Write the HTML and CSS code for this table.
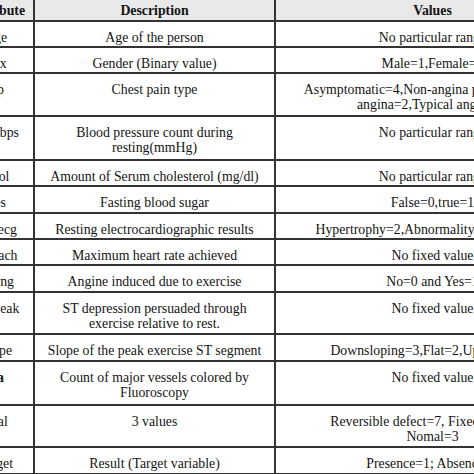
FILE: index.html
```html
<!DOCTYPE html>
<html>
<head>
<meta charset="utf-8">
<link rel="stylesheet" href="styles.css">
</head>
<body>
<div class="frame">
<table class="attrs">
<colgroup><col class="c-attr"><col class="c-desc"><col class="c-val"></colgroup>
<thead>
<tr class="h"><th>Attribute</th><th>Description</th><th>Values</th></tr>
</thead>
<tbody>
<tr class="s"><td>age</td><td>Age of the person</td><td>No particular range</td></tr>
<tr class="s"><td>sex</td><td>Gender (Binary value)</td><td>Male=1,Female=0</td></tr>
<tr class="d1"><td>cp</td><td>Chest pain type</td><td>Asymptomatic=4,Non-angina pain=3,Atypical<br>angina=2,Typical angina=1</td></tr>
<tr class="d2"><td>trestbps</td><td>Blood pressure count during<br>resting(mmHg)</td><td>No particular range</td></tr>
<tr class="s"><td>chol</td><td>Amount of Serum cholesterol (mg/dl)</td><td>No particular range</td></tr>
<tr class="s"><td>fbs</td><td>Fasting blood sugar</td><td>False=0,true=1</td></tr>
<tr class="s"><td>restecg</td><td>Resting electrocardiographic results</td><td>Hypertrophy=2,Abnormality=1,Normal=0</td></tr>
<tr class="s"><td>thalach</td><td>Maximum heart rate achieved</td><td>No fixed value</td></tr>
<tr class="s"><td>exang</td><td>Angine induced due to exercise</td><td>No=0 and Yes=1</td></tr>
<tr class="d1"><td>oldpeak</td><td>ST depression persuaded through<br>exercise relative to rest.</td><td>No fixed value</td></tr>
<tr class="s"><td>slope</td><td>Slope of the peak exercise ST segment</td><td>Downsloping=3,Flat=2,Upsloping=1</td></tr>
<tr class="d2"><td class="b">ca</td><td>Count of major vessels colored by<br>Fluoroscopy</td><td>No fixed value</td></tr>
<tr class="d1"><td>thal</td><td>3 values</td><td>Reversible defect=7, Fixed defect=6,<br>Nomal=3</td></tr>
<tr class="s"><td>target</td><td>Result (Target variable)</td><td>Presence=1; Absence=0</td></tr>
</tbody>
</table>
</div>
</body>
</html>
```
FILE: styles.css
```css
html, body {
  margin: 0;
  padding: 0;
  background: #ffffff;
}
.frame {
  width: 474px;
  height: 474px;
  overflow: hidden;
  position: relative;
}
.attrs {
  border-collapse: collapse;
  table-layout: fixed;
  width: 629px;
  margin-left: -40px;
  margin-top: -7px;
  font-family: "Liberation Serif", "Times New Roman", serif;
  font-size: 13.8px;
  line-height: 15px;
  color: #141414;
}
.c-attr { width: 73px; }
.c-desc { width: 241px; }
.c-val { width: 315px; }
.attrs th, .attrs td {
  border: 2px solid #333333;
  text-align: center;
  vertical-align: top;
  padding: 8px 0 0 0;
  white-space: nowrap;
}
.attrs th {
  background: #e9e9e9;
  font-weight: bold;
}
.attrs .b { font-weight: bold; }
.h { height: 26.5px; }
.s { height: 26.4px; }
.d1 { height: 42.3px; }
.d2 { height: 44.3px; }
```
